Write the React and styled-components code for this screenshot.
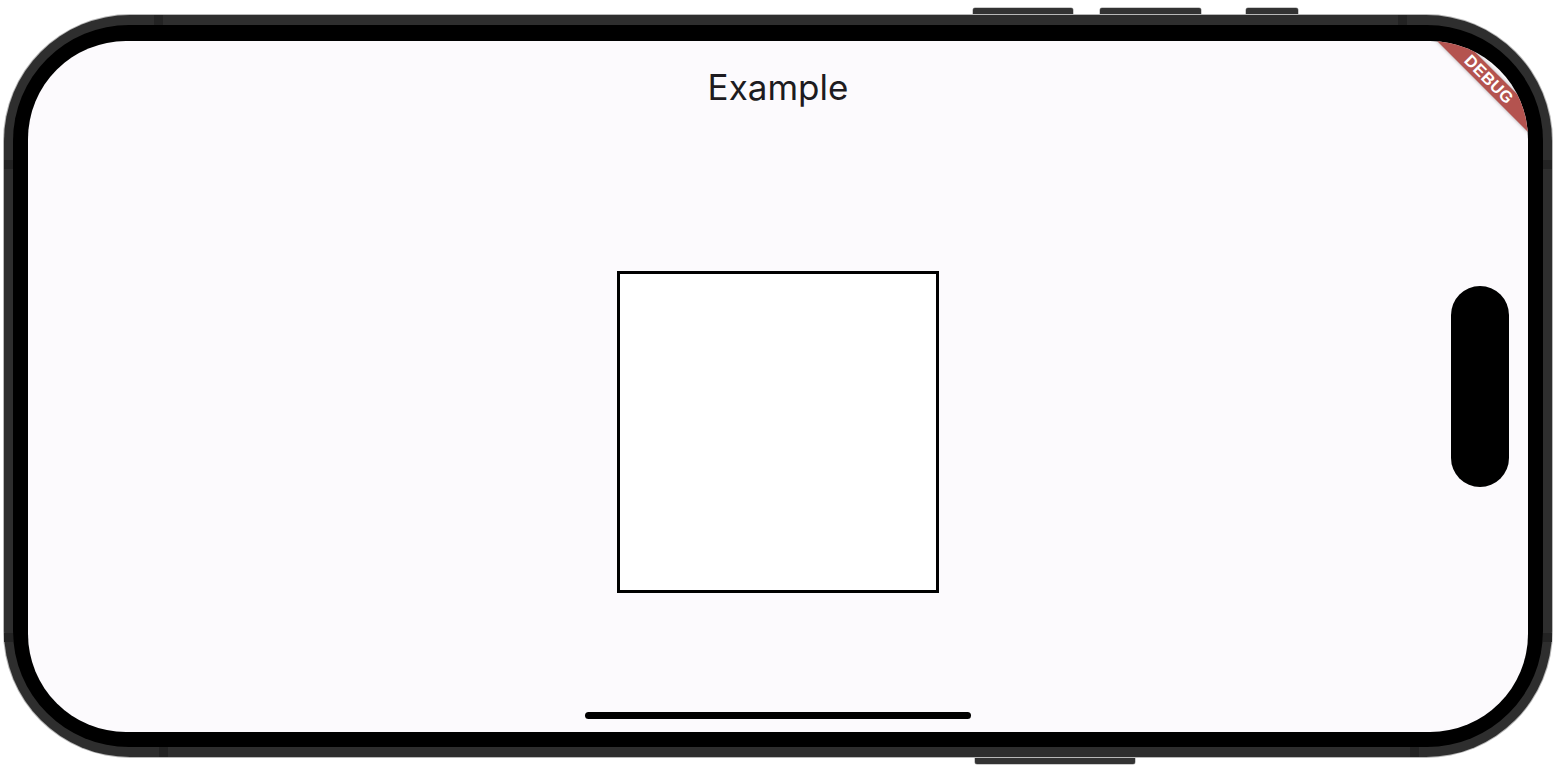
import React from "react";
import styled, { createGlobalStyle } from "styled-components";

const GlobalStyle = createGlobalStyle`
  html, body {
    margin: 0;
    padding: 0;
    background: #ffffff;
    font-family: Inter, "Noto Sans", "Liberation Sans", sans-serif;
  }
`;

const Page = styled.div`
  width: 1557px;
  height: 772px;
  display: flex;
  flex-direction: column;
  overflow: hidden;
`;

const ButtonRow = styled.div`
  display: flex;
  height: 7px;
  padding-left: ${(p) => p.$left}px;
  margin-top: ${(p) => p.$top || 0}px;
`;

const SideButton = styled.div`
  width: ${(p) => p.$w}px;
  margin-left: ${(p) => p.$gap || 0}px;
  height: 7px;
  background: #333333;
  border-radius: ${(p) => (p.$bottom ? "0 0 2px 2px" : "2px 2px 0 0")};
  box-shadow: 0 0 0 0.5px #9a9a9a;
`;

const Phone = styled.div`
  position: relative;
  margin-left: 4px;
  width: 1548px;
  height: 742px;
  box-sizing: border-box;
  padding: 10px 9px;
  background: #2e2e2e;
  border-radius: 126px;
  box-shadow: 0 0 0 1px #b8b8b8;
`;

const Antenna = styled.div`
  position: absolute;
  background: #232323;
  ${(p) =>
    p.$side === "top" || p.$side === "bottom"
      ? `width: 9px; height: 10px; ${p.$side}: 0; left: ${p.$at}px;`
      : `width: 9px; height: 9px; ${p.$side}: 0; top: ${p.$at}px;`}
`;

const Bezel = styled.div`
  height: 100%;
  box-sizing: border-box;
  padding: 16px 15px 15px;
  background: #000000;
  border-radius: 116px;
`;

const Screen = styled.div`
  position: relative;
  width: 1500px;
  height: 691px;
  background: #fcfafd;
  border-radius: 98px;
  overflow: hidden;
  display: flex;
  flex-direction: column;
`;

const AppBar = styled.div`
  height: 91px;
  flex: none;
  display: flex;
  align-items: center;
  justify-content: center;
`;

const Title = styled.h1`
  margin: 0;
  font-family: Inter, "Liberation Sans", sans-serif;
  font-weight: 400;
  font-size: 35px;
  line-height: 1;
  color: #1d1b20;
  transform: translateY(1px);
`;

const Body = styled.div`
  flex: 1;
  display: flex;
  align-items: center;
  justify-content: center;
`;

const Square = styled.div`
  width: 322px;
  height: 322px;
  box-sizing: border-box;
  border: 3px solid #000000;
  background: #ffffff;
`;

const Island = styled.div`
  position: absolute;
  right: 19px;
  top: 245px;
  width: 58px;
  height: 201px;
  border-radius: 29px;
  background: #000000;
`;

const HomeIndicator = styled.div`
  position: absolute;
  left: 557px;
  bottom: 13px;
  width: 386px;
  height: 7px;
  border-radius: 4px;
  background: #000000;
`;

const Banner = styled.div`
  position: absolute;
  top: 29px;
  right: -26px;
  width: 130px;
  height: 19px;
  transform: rotate(45deg);
  background: #b4534f;
  box-shadow: 0 0 4px rgba(0, 0, 0, 0.35);
  display: flex;
  align-items: center;
  justify-content: center;
  color: #ffffff;
  font-family: "Liberation Sans", Arial, sans-serif;
  font-weight: 900;
  font-size: 16.5px;
  line-height: 1;
  letter-spacing: 0.4px;
`;

export default function App() {
  return (
    <>
      <GlobalStyle />
      <Page>
        <ButtonRow $left={973} $top={8}>
          <SideButton $w={100} />
          <SideButton $w={101} $gap={27} />
          <SideButton $w={52} $gap={45} />
        </ButtonRow>
        <Phone>
          <Antenna $side="top" $at={150} />
          <Antenna $side="top" $at={1394} />
          <Antenna $side="bottom" $at={155} />
          <Antenna $side="bottom" $at={1406} />
          <Antenna $side="left" $at={145} />
          <Antenna $side="left" $at={618} />
          <Antenna $side="right" $at={145} />
          <Antenna $side="right" $at={618} />
          <Bezel>
            <Screen>
              <AppBar>
                <Title>Example</Title>
              </AppBar>
              <Body>
                <Square />
              </Body>
              <Island />
              <HomeIndicator />
              <Banner>DEBUG</Banner>
            </Screen>
          </Bezel>
        </Phone>
        <ButtonRow $left={975}>
          <SideButton $w={160} $bottom />
        </ButtonRow>
      </Page>
    </>
  );
}
